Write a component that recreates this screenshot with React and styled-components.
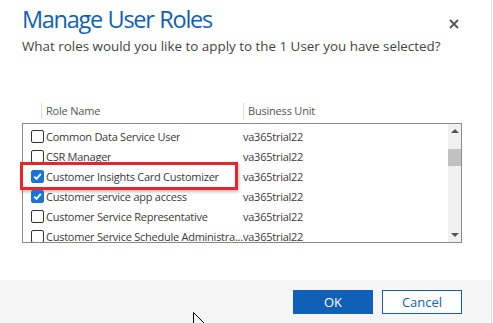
import React from "react";
import styled, { createGlobalStyle } from "styled-components";

const GlobalStyle = createGlobalStyle`
  html, body {
    margin: 0;
    padding: 0;
    background: #ffffff;
  }
  body {
    font-family: "Open Sans", "Noto Sans", sans-serif;
  }
`;

const Dialog = styled.div`
  position: relative;
  width: 493px;
  height: 323px;
  box-sizing: border-box;
  display: flex;
  flex-direction: column;
  background: #fff;
  overflow: hidden;

  &::after {
    content: "";
    position: absolute;
    top: 0;
    bottom: 0;
    right: 1px;
    width: 1px;
    background: #e1e1e1;
  }
`;

const Header = styled.div`
  position: relative;
  padding: 4px 0 0 22px;
`;

const Title = styled.h1`
  margin: 0;
  font-family: "Open Sans", sans-serif;
  font-weight: 400;
  font-size: 23.5px;
  line-height: 30px;
  color: #1160b7;
  letter-spacing: -1.3px;
  word-spacing: 1px;
`;

const Subtitle = styled.p`
  margin: 2px 0 0 0;
  font-size: 13.4px;
  line-height: 20px;
  color: #444;
`;

const CloseButton = styled.button`
  position: absolute;
  top: 16px;
  left: 446px;
  width: 16px;
  height: 16px;
  padding: 0;
  border: none;
  background: none;
  display: flex;
  align-items: center;
  justify-content: center;
`;

const Body = styled.div`
  flex: 1;
  padding: 45px 0 0 22px;
`;

const HeadRow = styled.div`
  display: grid;
  grid-template-columns: 19px 202px 202px;
  height: 20px;
  align-items: center;
`;

const HeadCell = styled.div`
  font-size: 11px;
  letter-spacing: -0.2px;
  color: #555;
  border-left: 1px solid #dcdcdc;
  padding-left: 4px;
  height: 16px;
  line-height: 16px;
  white-space: nowrap;
`;

const ListBox = styled.div`
  margin-top: 2px;
  width: 440px;
  height: 120px;
  box-sizing: border-box;
  border: 1px solid #8a8a8a;
  display: flex;
`;

const Rows = styled.div`
  flex: 1;
  padding-top: 2px;
  overflow: hidden;
  margin-left: -3px;
  padding-left: 3px;
`;

const Row = styled.div`
  position: relative;
  display: grid;
  grid-template-columns: 212px 1fr;
  height: 20px;
  align-items: center;
  padding-left: 8px;
  font-size: 11px;
  letter-spacing: -0.25px;
  color: #3a3a3a;
  white-space: nowrap;
`;

const NameCell = styled.div`
  display: flex;
  align-items: center;
  gap: 2px;
  min-width: 0;
`;

const NameText = styled.span`
  overflow: hidden;
  text-overflow: ellipsis;
`;

const Box = styled.span`
  flex: none;
  width: 11px;
  height: 11px;
  border: 1px solid ${p => (p.checked ? "#1a73d9" : "#333")};
  border-radius: 2px;
  background: ${p => (p.checked ? "#1a73d9" : "#fff")};
  display: flex;
  align-items: center;
  justify-content: center;
`;

const Highlight = styled.div`
  position: absolute;
  left: -3px;
  top: -4px;
  width: 218px;
  height: 28px;
  box-sizing: border-box;
  border: 3px solid #e8232a;
  box-shadow: 1px 2px 3px rgba(0, 0, 0, 0.25);
  pointer-events: none;
`;

const Scrollbar = styled.div`
  width: 13px;
  background: #f0f0f0;
  position: relative;
  display: flex;
  flex-direction: column;
  align-items: center;
`;

const Arrow = styled.div`
  width: 0;
  height: 0;
  border-left: 4px solid transparent;
  border-right: 4px solid transparent;
  ${p =>
    p.down
      ? "border-top: 4px solid #555; margin-top: auto; margin-bottom: 5px;"
      : "border-bottom: 4px solid #555; margin-top: 5px;"}
`;

const Thumb = styled.div`
  width: 13px;
  height: 17px;
  background: #c1c1c1;
  margin-top: 16px;
`;

const Footer = styled.div`
  height: 43px;
  background: #f5f5f5;
  display: flex;
  justify-content: flex-end;
  align-items: flex-start;
  gap: 9px;
  padding: 10px 31px 0 0;
  box-sizing: border-box;
  position: relative;
`;

const Button = styled.button`
  width: 80px;
  height: 24px;
  box-sizing: border-box;
  font-family: "Open Sans", sans-serif;
  font-size: 13px;
  border: 1px solid #1160b7;
  background: ${p => (p.primary ? "#1160b7" : "#fff")};
  color: ${p => (p.primary ? "#fff" : "#1160b7")};
  padding: 0;
`;

const Cursor = styled.svg`
  position: absolute;
  left: 193px;
  top: 32px;
`;

const roles = [
  { name: "Common Data Service User", checked: false },
  { name: "CSR Manager", checked: false },
  { name: "Customer Insights Card Customizer", checked: true, marked: true },
  { name: "Customer service app access", checked: true },
  { name: "Customer Service Representative", checked: false },
  { name: "Customer Service Schedule Administra...", checked: false }
];

const Check = () => (
  <svg width="9" height="9" viewBox="0 0 9 9">
    <path d="M1.2 4.6 L3.5 6.9 L7.8 1.8" fill="none" stroke="#fff" strokeWidth="1.8" />
  </svg>
);

export default function App() {
  return (
    <Dialog>
      <GlobalStyle />
      <Header>
        <Title>Manage User Roles</Title>
        <Subtitle>What roles would you like to apply to the 1 User you have selected?</Subtitle>
        <CloseButton aria-label="Close">
          <svg width="10" height="10" viewBox="0 0 10 10">
            <path d="M1 1 L9 9 M9 1 L1 9" stroke="#555" strokeWidth="1.8" />
          </svg>
        </CloseButton>
      </Header>
      <Body>
        <HeadRow>
          <span />
          <HeadCell>Role Name</HeadCell>
          <HeadCell>Business Unit</HeadCell>
        </HeadRow>
        <ListBox>
          <Rows>
            {roles.map(r => (
              <Row key={r.name}>
                <NameCell>
                  <Box checked={r.checked}>{r.checked && <Check />}</Box>
                  <NameText>{r.name}</NameText>
                </NameCell>
                <span>va365trial22</span>
                {r.marked && <Highlight />}
              </Row>
            ))}
          </Rows>
          <Scrollbar>
            <Arrow />
            <Thumb />
            <Arrow down />
          </Scrollbar>
        </ListBox>
      </Body>
      <Footer>
        <Button primary>OK</Button>
        <Button>Cancel</Button>
        <Cursor width="12" height="12" viewBox="0 0 12 12">
          <path d="M0.5 0.5 L0.5 11.5 M0.5 0.5 L11 11" fill="none" stroke="#000" strokeWidth="1" />
        </Cursor>
      </Footer>
    </Dialog>
  );
}
